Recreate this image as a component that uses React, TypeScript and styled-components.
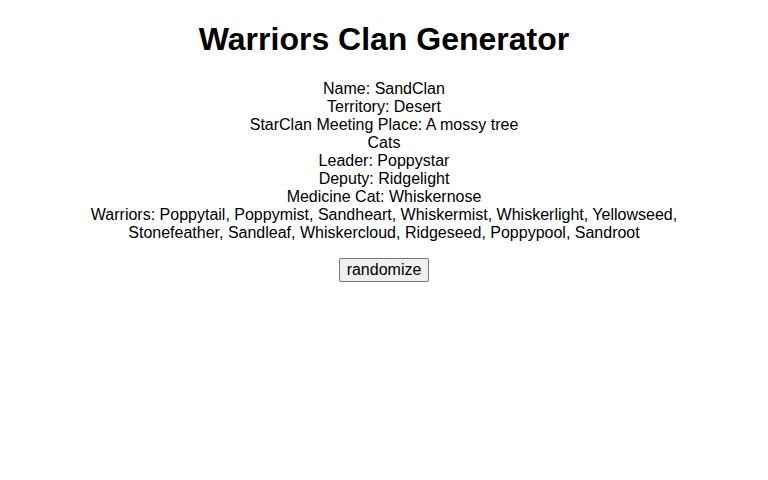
import React, { useState } from 'react';
import styled, { createGlobalStyle } from 'styled-components';

const GlobalStyle = createGlobalStyle`
  body {
    margin: 0;
    font-family: "Liberation Sans", Arial, sans-serif;
    color: #000;
    background: #fff;
  }
`;

const Page = styled.div`
  text-align: center;
`;

const Title = styled.h1`
  font-size: 32px;
  font-weight: bold;
  margin: 21.44px 0;
`;

const Info = styled.div`
  max-width: 620px;
  margin: 0 auto;
  font-size: 16px;
`;

const Line = styled.div``;

const Actions = styled.div`
  margin-top: 16px;
`;

const RandomButton = styled.button`
  font-family: "Liberation Sans", Arial, sans-serif;
  font-size: 16px;
  color: #000;
  background: #efefef;
  border: 1px solid #767676;
  border-radius: 2px;
  padding: 2px 7px;
  line-height: normal;
  cursor: pointer;

  &:hover {
    background: #e5e5e5;
  }
`;

const prefixes = ['Sand', 'Poppy', 'Whisker', 'Ridge', 'Yellow', 'Stone'];
const suffixes = ['tail', 'mist', 'heart', 'light', 'seed', 'feather', 'leaf', 'cloud', 'pool', 'root', 'nose'];
const pick = <T,>(list: T[]) => list[Math.floor(Math.random() * list.length)];

const initial = {
  name: 'SandClan',
  territory: 'Desert',
  meeting: 'A mossy tree',
  leader: 'Poppystar',
  deputy: 'Ridgelight',
  medicine: 'Whiskernose',
  warriors: [
    'Poppytail', 'Poppymist', 'Sandheart', 'Whiskermist', 'Whiskerlight', 'Yellowseed',
    'Stonefeather', 'Sandleaf', 'Whiskercloud', 'Ridgeseed', 'Poppypool', 'Sandroot',
  ],
};

const App: React.FC = () => {
  const [clan, setClan] = useState(initial);

  const randomize = () => {
    const name = () => pick(prefixes) + pick(suffixes);
    setClan({
      name: pick(prefixes) + 'Clan',
      territory: pick(['Desert', 'Forest', 'Marsh', 'Moor', 'Mountains']),
      meeting: pick(['A mossy tree', 'A great rock', 'A hollow stump', 'A quiet pool']),
      leader: pick(prefixes) + 'star',
      deputy: name(),
      medicine: name(),
      warriors: Array.from({ length: 12 }, name),
    });
  };

  return (
    <>
      <GlobalStyle />
      <Page>
        <Title>Warriors Clan Generator</Title>
        <Info>
          <Line>Name: {clan.name}</Line>
          <Line>Territory: {clan.territory}</Line>
          <Line>StarClan Meeting Place: {clan.meeting}</Line>
          <Line>Cats</Line>
          <Line>Leader: {clan.leader}</Line>
          <Line>Deputy: {clan.deputy}</Line>
          <Line>Medicine Cat: {clan.medicine}</Line>
          <Line>Warriors: {clan.warriors.join(', ')}</Line>
        </Info>
        <Actions>
          <RandomButton onClick={randomize}>randomize</RandomButton>
        </Actions>
      </Page>
    </>
  );
};

export default App;
